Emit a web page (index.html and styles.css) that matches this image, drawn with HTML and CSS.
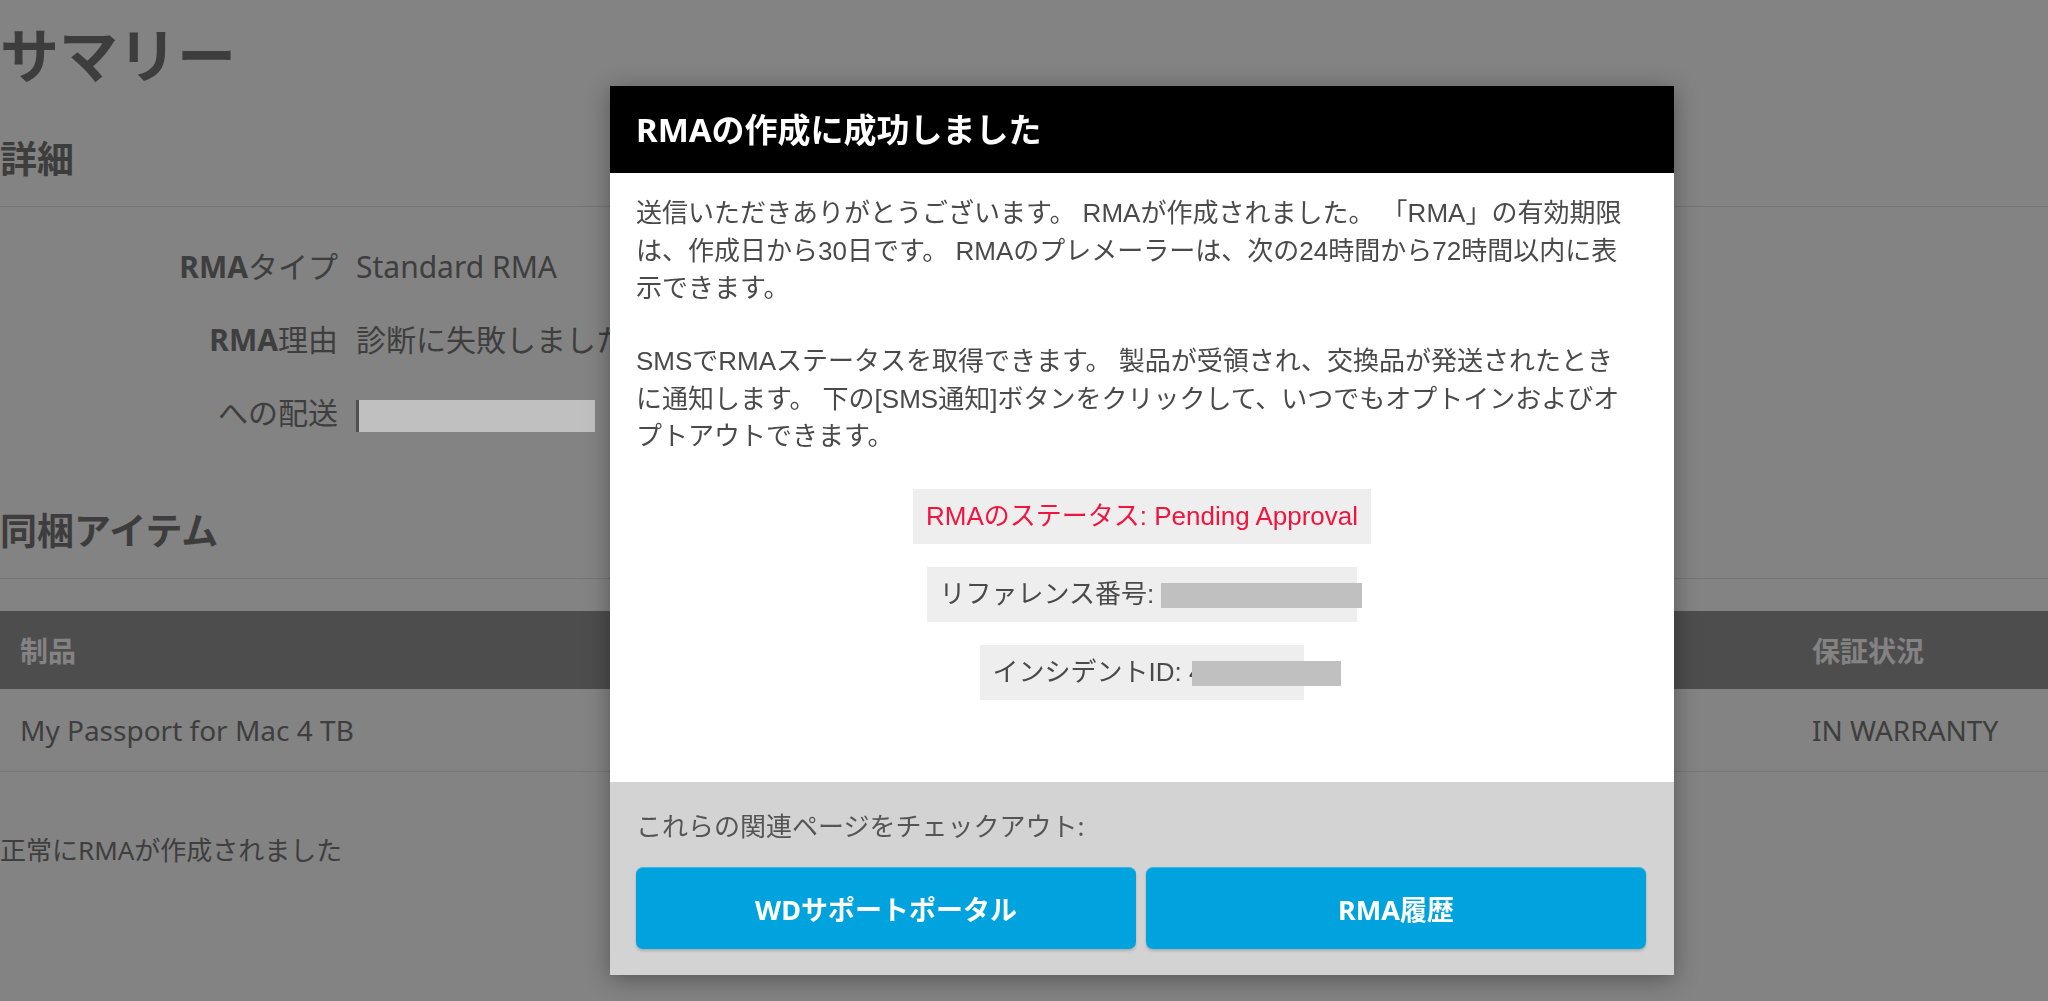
FILE: index.html
```html
<!DOCTYPE html>
<html lang="ja">
<head>
<meta charset="utf-8">
<title>サマリー</title>
<link rel="stylesheet" href="styles.css">
</head>
<body>
<main class="page">
  <h1 class="page-title">サマリー</h1>
  <section class="details">
    <h2 class="section-title">詳細</h2>
    <dl class="detail-list">
      <dt><b>RMA</b>タイプ</dt><dd>Standard RMA</dd>
      <dt><b>RMA</b>理由</dt><dd>診断に失敗しました</dd>
      <dt>への配送</dt><dd><span class="redact redact-address"></span></dd>
    </dl>
  </section>
  <section class="items">
    <h2 class="section-title items-title">同梱アイテム</h2>
    <div class="item-table">
      <div class="item-head"><span>制品</span><span>保証状況</span></div>
      <div class="item-row"><span>My Passport for Mac 4 TB</span><span>IN WARRANTY</span></div>
    </div>
    <p class="created-note">正常にRMAが作成されました</p>
  </section>
</main>

<div class="backdrop"></div>

<div class="modal" role="dialog">
  <header class="modal-header">
    <h2 class="modal-title">RMAの作成に成功しました</h2>
  </header>
  <div class="modal-body">
    <p>送信いただきありがとうございます。 RMAが作成されました。 「RMA」の有効期限は、作成日から30日です。 RMAのプレメーラーは、次の24時間から72時間以内に表示できます。</p>
    <p>SMSでRMAステータスを取得できます。 製品が受領され、交換品が発送されたときに通知します。 下の[SMS通知]ボタンをクリックして、いつでもオプトインおよびオプトアウトできます。</p>
    <div class="status-list">
      <div class="status status-pending">RMAのステータス: Pending Approval</div>
      <div class="status">リファレンス番号: <span class="redact redact-ref"></span></div>
      <div class="status">インシデントID: 4<span class="redact redact-incident"></span></div>
    </div>
  </div>
  <footer class="modal-footer">
    <p class="footer-label">これらの関連ページをチェックアウト:</p>
    <div class="footer-actions">
      <a class="btn" href="#">WDサポートポータル</a>
      <a class="btn" href="#">RMA履歴</a>
    </div>
  </footer>
</div>
</body>
</html>
```

FILE: styles.css
```css
html, body {
  margin: 0;
  padding: 0;
}

body {
  background: #ffffff;
  font-family: "Noto Sans", "Noto Sans CJK JP", sans-serif;
  color: #7a7a7a;
  height: 1001px;
  overflow: hidden;
}

.page {
  padding: 0;
}

.page-title {
  margin: 20px 0 0;
  font-size: 59px;
  line-height: 70px;
  font-weight: 700;
  color: #787878;
}

.section-title {
  margin: 47px 0 0;
  padding-bottom: 25px;
  font-size: 37px;
  line-height: 44px;
  font-weight: 700;
  color: #787878;
  border-bottom: 1px solid #e4e4e4;
}

.detail-list {
  display: grid;
  grid-template-columns: 338px auto;
  column-gap: 18px;
  row-gap: 33px;
  margin: 40px 0 0;
  font-size: 30px;
  line-height: 40px;
}

.detail-list dt {
  text-align: right;
  font-weight: 400;
  white-space: nowrap;
}

.detail-list dt b {
  font-weight: 700;
}

.detail-list dd {
  margin: 0;
  white-space: nowrap;
}

.items-title {
  margin-top: 76px;
}

.item-table {
  margin-top: 32px;
}

.item-head,
.item-row {
  display: grid;
  grid-template-columns: 1fr 236px;
  align-items: center;
  padding-left: 20px;
  box-sizing: border-box;
  font-size: 28px;
}

.item-head {
  height: 78px;
  background: #969696;
  color: #ffffff;
  font-weight: 700;
}

.item-row {
  height: 83px;
  border-bottom: 1px solid #e6e6e6;
}

.created-note {
  margin: 60px 0 0;
  font-size: 26px;
  line-height: 37px;
}

.redact {
  display: inline-block;
  background: #c0c0c0;
  vertical-align: middle;
}

.redact-address {
  position: relative;
  z-index: 20;
  width: 236px;
  height: 32px;
  border-left: 3px solid #505050;
}

/* Modal */

.backdrop {
  position: fixed;
  inset: 0;
  background: rgba(0, 0, 0, 0.486);
  z-index: 10;
}

.modal {
  position: fixed;
  left: 610px;
  top: 86px;
  width: 1064px;
  z-index: 30;
  background: #ffffff;
  box-shadow: 0 4px 22px rgba(0, 0, 0, 0.35);
}

.modal-header {
  display: flex;
  align-items: center;
  height: 87px;
  padding: 0 26px;
  box-sizing: border-box;
  background: #000000;
}

.modal-title {
  margin: 0;
  color: #ffffff;
  font-size: 33px;
  font-weight: 700;
  line-height: 1;
}

.modal-body {
  padding: 22px 38px 82px 26px;
  font-family: "Liberation Sans", "Noto Sans CJK JP", sans-serif;
  font-size: 26px;
  line-height: 37.5px;
  color: #4a4a4a;
}

.modal-body p {
  margin: 0;
}

.modal-body p + p {
  margin-top: 35.5px;
}

.status-list {
  display: flex;
  flex-direction: column;
  align-items: center;
  gap: 23px;
  margin: 33px -12px 0 0;
}

.status {
  height: 55px;
  line-height: 55px;
  padding: 0 13px;
  background: #eeeeee;
  white-space: nowrap;
}

.status-pending {
  color: #f2143f;
}

.redact-ref {
  width: 201px;
  height: 25px;
  margin-right: -18px;
}

.redact-incident {
  width: 149px;
  height: 25px;
  margin-left: -11px;
  margin-right: -50px;
}

.modal-footer {
  padding: 26px 28px 26px 26px;
  background: #d3d3d3;
}

.footer-label {
  margin: 0;
  font-size: 26px;
  line-height: 37px;
  color: #555555;
}

.footer-actions {
  display: grid;
  grid-template-columns: 1fr 1fr;
  gap: 10px;
  margin-top: 22px;
}

.btn {
  display: flex;
  align-items: center;
  justify-content: center;
  height: 82px;
  box-sizing: border-box;
  border-radius: 7px;
  border-top: 1px solid #3ab5e6;
  background: #00a3de;
  color: #ffffff;
  font-size: 27px;
  font-weight: 700;
  text-decoration: none;
  box-shadow: 0 2px 3px rgba(0, 0, 0, 0.18);
}
```
